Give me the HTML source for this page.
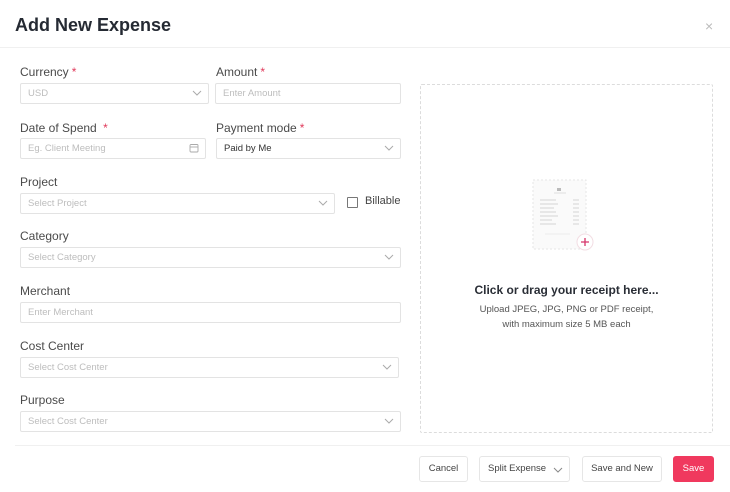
<!DOCTYPE html>
<html><head><meta charset="utf-8"><style>
*{box-sizing:border-box;margin:0;padding:0}
body{width:730px;height:492px;background:#fff;font-family:"Liberation Sans",sans-serif;position:relative;overflow:hidden;color:#333}
.a{position:absolute}
.t{left:15px;top:15px;font-size:18px;font-weight:bold;color:#252a33}
.hd{left:0;top:47px;width:730px;height:1px;background:#f0f0f0}
.lb{font-size:12px;color:#4a4a4a}
.lb i{font-style:normal;color:#e0395a;margin-left:3px}
.in{height:21px;border:1px solid #e3e3e3;border-radius:2px;font-size:9.5px;color:#bdbdbd;padding:0 7px;line-height:19px}
.ch{position:absolute;right:6px;top:5px;width:10px;height:8px}
.dz{left:420px;top:84px;width:293px;height:349px;border:1px dashed #dcdcdc;border-radius:2px}
.btn{height:26px;border:1px solid #e6e6e6;border-radius:3px;font-size:9.5px;color:#444;line-height:24px;text-align:center;background:#fff}
</style></head><body>
<div class="a t">Add New Expense</div>
<div class="a" style="left:705px;top:18px;font-size:14px;color:#bbb">×</div>
<div class="a hd"></div>

<div class="a lb" style="left:20px;top:65px">Currency<i>*</i></div>
<div class="a in" style="left:20px;top:83px;width:189px">USD<svg class="ch" viewBox="0 0 10 8"><path d="M1 2l4 4 4-4" fill="none" stroke="#aaa" stroke-width="1"/></svg></div>
<div class="a lb" style="left:216px;top:65px">Amount<i>*</i></div>
<div class="a in" style="left:215px;top:83px;width:186px">Enter Amount</div>

<div class="a lb" style="left:20px;top:121px">Date of Spend <i>*</i></div>
<div class="a in" style="left:20px;top:138px;width:186px">Eg. Client Meeting<svg class="ch" viewBox="0 0 10 10" style="height:10px;top:4px"><rect x="1" y="1.5" width="8" height="7.5" rx="1" fill="none" stroke="#aaa" stroke-width=".9"/><path d="M1 4h8" stroke="#aaa" stroke-width=".9"/></svg></div>
<div class="a lb" style="left:216px;top:121px">Payment mode<i>*</i></div>
<div class="a in" style="left:216px;top:138px;width:185px;color:#333">Paid by Me<svg class="ch" viewBox="0 0 10 8"><path d="M1 2l4 4 4-4" fill="none" stroke="#aaa" stroke-width="1"/></svg></div>

<div class="a lb" style="left:20px;top:175px">Project</div>
<div class="a in" style="left:20px;top:193px;width:315px">Select Project<svg class="ch" viewBox="0 0 10 8"><path d="M1 2l4 4 4-4" fill="none" stroke="#aaa" stroke-width="1"/></svg></div>
<div class="a" style="left:347px;top:197px;width:11px;height:11px;border:1px solid #777;border-radius:1px"></div>
<div class="a" style="left:365px;top:195px;font-size:11px;color:#444">Billable</div>

<div class="a lb" style="left:20px;top:229px">Category</div>
<div class="a in" style="left:20px;top:247px;width:381px">Select Category<svg class="ch" viewBox="0 0 10 8"><path d="M1 2l4 4 4-4" fill="none" stroke="#aaa" stroke-width="1"/></svg></div>

<div class="a lb" style="left:20px;top:284px">Merchant</div>
<div class="a in" style="left:20px;top:302px;width:381px">Enter Merchant</div>

<div class="a lb" style="left:20px;top:339px">Cost Center</div>
<div class="a in" style="left:20px;top:357px;width:379px">Select Cost Center<svg class="ch" viewBox="0 0 10 8"><path d="M1 2l4 4 4-4" fill="none" stroke="#aaa" stroke-width="1"/></svg></div>

<div class="a lb" style="left:20px;top:393px">Purpose</div>
<div class="a in" style="left:20px;top:411px;width:381px">Select Cost Center<svg class="ch" viewBox="0 0 10 8"><path d="M1 2l4 4 4-4" fill="none" stroke="#aaa" stroke-width="1"/></svg></div>

<div class="a dz"></div>
<svg class="a" style="left:530px;top:178px" width="68" height="75" viewBox="0 0 68 75">
<rect x="3" y="2" width="53" height="69" fill="#fafafa" stroke="#e6e6e6" stroke-dasharray="2 2"/>
<rect x="27" y="10" width="4" height="3" fill="#bbb"/>
<path d="M24 15h12" stroke="#ddd"/>
<g stroke="#dcdcdc" stroke-width="1.2"><path d="M10 22h16M43 22h6M10 26h18M43 26h6M10 30h14M43 30h6M10 34h16M43 34h6M10 38h18M43 38h6M10 42h12M43 42h6M10 46h16M43 46h6"/></g>
<path d="M15 56h25" stroke="#ececec"/>
<circle cx="55" cy="64" r="8" fill="#fff" stroke="#f2dde3"/>
<path d="M51 64h8M55 60v8" stroke="#d6356a" stroke-width="1.3"/>
</svg>
<div class="a" style="left:420px;top:283px;width:293px;text-align:center;font-size:12px;font-weight:bold;color:#2a2e36">Click or drag your receipt here...</div>
<div class="a" style="left:420px;top:302px;width:293px;text-align:center;font-size:9.5px;line-height:15px;color:#555">Upload JPEG, JPG, PNG or PDF receipt,<br>with maximum size 5 MB each</div>

<div class="a" style="left:15px;top:445px;width:715px;height:1px;background:#f0f0f0"></div>
<div class="a btn" style="left:419px;top:456px;width:49px">Cancel</div>
<div class="a btn" style="left:479px;top:456px;width:91px;text-align:left;padding-left:8px">Split Expense<svg style="position:absolute;right:6px;top:9px" width="10" height="8" viewBox="0 0 10 8"><path d="M1 2l4 4 4-4" fill="none" stroke="#888" stroke-width="1"/></svg></div>
<div class="a btn" style="left:582px;top:456px;width:80px">Save and New</div>
<div class="a btn" style="left:673px;top:456px;width:41px;background:#f0395e;border-color:#f0395e;color:#fff">Save</div>
</body></html>
